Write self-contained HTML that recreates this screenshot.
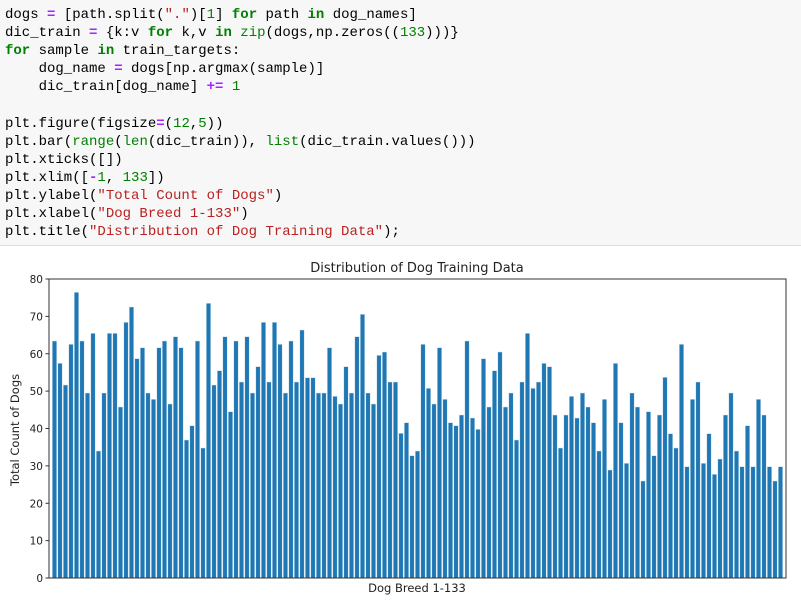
<!DOCTYPE html>
<html><head><meta charset="utf-8">
<style>
body{margin:0;width:801px;height:608px;background:#fff;overflow:hidden;position:relative}
.code{position:absolute;left:0;top:0;width:801px;height:245px;background:#f7f7f7;border-bottom:1px solid #e0e0e0}
pre{margin:0;position:absolute;left:5px;top:6px;font-family:"Liberation Mono",monospace;font-size:14px;line-height:18.1px;color:#000}
.k{color:#008000;font-weight:bold}.o{color:#aa22ff;font-weight:bold}.s{color:#ba2121}.n{color:#008000}.b{color:#008000}
svg{position:absolute;left:0;top:0}
svg text{font-family:"DejaVu Sans","Liberation Sans",sans-serif;fill:#222}
</style></head><body>
<div class="code"><pre>dogs <span class="o">=</span> [path.split(<span class="s">"."</span>)[<span class="n">1</span>] <span class="k">for</span> path <span class="k">in</span> dog_names]
dic_train <span class="o">=</span> {k:v <span class="k">for</span> k,v <span class="k">in</span> <span class="b">zip</span>(dogs,np.zeros((<span class="n">133</span>)))}
<span class="k">for</span> sample <span class="k">in</span> train_targets:
    dog_name <span class="o">=</span> dogs[np.argmax(sample)]
    dic_train[dog_name] <span class="o">+=</span> <span class="n">1</span>

plt.figure(figsize<span class="o">=</span>(<span class="n">12</span>,<span class="n">5</span>))
plt.bar(<span class="b">range</span>(<span class="b">len</span>(dic_train)), <span class="b">list</span>(dic_train.values()))
plt.xticks([])
plt.xlim([<span class="o">-</span><span class="n">1</span>, <span class="n">133</span>])
plt.ylabel(<span class="s">"Total Count of Dogs"</span>)
plt.xlabel(<span class="s">"Dog Breed 1-133"</span>)
plt.title(<span class="s">"Distribution of Dog Training Data"</span>);</pre></div>
<svg id="c" width="801" height="608" xmlns="http://www.w3.org/2000/svg">
<text x="417" y="272" font-size="13" text-anchor="middle">Distribution of Dog Training Data</text>
<text x="417" y="592" font-size="11.5" text-anchor="middle">Dog Breed 1-133</text>
<text x="19" y="430" font-size="11.5" text-anchor="middle" transform="rotate(-90 19 430)">Total Count of Dogs</text>
<g id="bars"></g>
<g id="ticks"></g>
<rect x="49" y="279" width="737" height="299" fill="none" stroke="#333" stroke-width="1"/>
</svg>
<script>
var t=[213,280,345,223,67,213,369,190,543,369,190,190,411,157,111,266,233,369,388,233,213,402,200,233,510,467,213,534,100,345,302,200,425,213,
336,200,369,290,157,336,157,223,369,213,336,180,323,323,369,369,233,379,402,290,369,200,133,369,402,256,246,336,336,490,458,557,543,223,355,
402,233,388,458,467,435,213,444,478,266,411,302,246,411,369,510,336,190,355,336,280,290,435,534,435,379,444,369,411,458,543,388,600,280,458,
580,369,411,633,425,557,435,322,491,534,223,590,388,336,580,491,613,567,435,369,543,590,467,590,388,435,590,633,590];
var s='';
for(var i=0;i<t.length;i++){var y=270+t[i]/3;var x=52.3+5.5*i;
s+='<rect x="'+x.toFixed(2)+'" y="'+y.toFixed(2)+'" width="4.4" height="'+(578-y).toFixed(2)+'" fill="#1f77b4" stroke="#d6e4f0" stroke-width="0.5"/>';}
document.getElementById('bars').innerHTML=s;
var k='';
for(var v=0;v<=80;v+=10){var y=578-v*299/80;
k+='<line x1="45.5" x2="49" y1="'+y+'" y2="'+y+'" stroke="#333"/>';
k+='<text x="43" y="'+(y+4)+'" font-size="10.5" text-anchor="end">'+v+'</text>';}
document.getElementById('ticks').innerHTML=k;
</script>
</body></html>
